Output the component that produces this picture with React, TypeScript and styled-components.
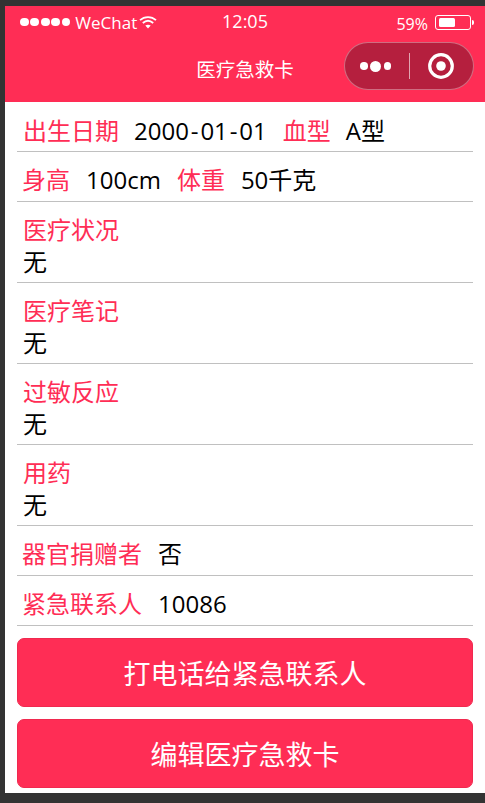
import React from "react"
import styled, { createGlobalStyle } from "styled-components"

const RED = "#ff2d55"

const Global = createGlobalStyle`
  html, body {
    margin: 0;
    padding: 0;
    background: #333333;
  }
  * {
    box-sizing: border-box;
  }
`

type Field = { label: string; value: string }

const inlineRows: Field[][] = [
  [
    { label: "出生日期", value: "2000-01-01" },
    { label: "血型", value: "A型" },
  ],
  [
    { label: "身高", value: "100cm" },
    { label: "体重", value: "50千克" },
  ],
]

const stackedRows: Field[] = [
  { label: "医疗状况", value: "无" },
  { label: "医疗笔记", value: "无" },
  { label: "过敏反应", value: "无" },
  { label: "用药", value: "无" },
]

const bottomRows: Field[] = [
  { label: "器官捐赠者", value: "否" },
  { label: "紧急联系人", value: "10086" },
]

function WifiIcon() {
  return (
    <svg width="18" height="14" viewBox="0 0 18 14" fill="none" stroke="#fff" strokeWidth="1.8">
      <path d="M1 5.2C5.6 1 12.4 1 17 5.2" />
      <path d="M3.8 8C7 5.2 11 5.2 14.2 8" />
      <path d="M9 13.6L6.3 10.6C8 9.3 10 9.3 11.7 10.6Z" fill="#fff" stroke="none" />
    </svg>
  )
}

function RecordIcon() {
  return (
    <svg width="28" height="28" viewBox="0 0 28 28">
      <circle cx="14" cy="14" r="11.3" fill="none" stroke="#fff" strokeWidth="3.2" />
      <circle cx="14" cy="14" r="4.8" fill="#fff" />
    </svg>
  )
}

// the hyphens of the date are wider than in the font we have
function renderValue(value: string) {
  if (!value.includes("-")) return value
  return value.split("-").map((part, i) => (
    <React.Fragment key={i}>
      {i > 0 && <Hyphen>-</Hyphen>}
      {part}
    </React.Fragment>
  ))
}

export default function App() {
  return (
    <>
      <Global />
      <Page>
        <Header>
          <StatusBar>
            <Carrier>
              <Signal>
                {[0, 1, 2, 3, 4].map((i) => (
                  <SignalDot key={i} />
                ))}
              </Signal>
              <CarrierName>WeChat</CarrierName>
              <WifiIcon />
            </Carrier>
            <Time>12:05</Time>
            <Power>
              <span>59%</span>
              <Battery>
                <BatteryFill />
              </Battery>
              <BatteryTip />
            </Power>
          </StatusBar>
          <NavBar>
            <NavTitle>医疗急救卡</NavTitle>
            <Capsule>
              <MoreDots>
                <MoreDot />
                <MoreDot $big />
                <MoreDot />
              </MoreDots>
              <CapsuleLine />
              <RecordIcon />
            </Capsule>
          </NavBar>
        </Header>
        <Content>
          {inlineRows.map((row, i) => (
            <InlineRow key={i} $first={i === 0}>
              {row.map((f) => (
                <Pair key={f.label} $first={i === 0}>
                  <Label>{f.label}</Label>
                  <Value>{renderValue(f.value)}</Value>
                </Pair>
              ))}
            </InlineRow>
          ))}
          {stackedRows.map((f) => (
            <StackedRow key={f.label}>
              <Label>{f.label}</Label>
              <Value>{f.value}</Value>
            </StackedRow>
          ))}
          {bottomRows.map((f) => (
            <InlineRow key={f.label}>
              <Pair>
                <Label>{f.label}</Label>
                <Value>{f.value}</Value>
              </Pair>
            </InlineRow>
          ))}
          <ActionButton>打电话给紧急联系人</ActionButton>
          <ActionButton>编辑医疗急救卡</ActionButton>
        </Content>
      </Page>
    </>
  )
}

const Page = styled.div`
  width: 480px;
  height: 787px;
  margin: 6px 0 0 5px;
  background: #fff;
  font-family: "Open Sans", "Noto Sans CJK SC", sans-serif;
`

const Header = styled.div`
  height: 96px;
  background: ${RED};
  color: #fff;
`

const StatusBar = styled.div`
  height: 36px;
  padding: 0 11px 0 15px;
  display: grid;
  grid-template-columns: 1fr auto 1fr;
  align-items: center;
`

const Carrier = styled.div`
  display: flex;
  align-items: center;
  margin-bottom: 4px;
`

const CarrierName = styled.span`
  font-size: 17px;
  margin-right: 2px;
`

const Signal = styled.div`
  display: flex;
  gap: 1.6px;
  margin-right: 5px;
`

const SignalDot = styled.div`
  width: 8.8px;
  height: 8.8px;
  border-radius: 50%;
  background: #fff;
`

const Time = styled.div`
  font-size: 18px;
  margin-bottom: 7px;
  transform: translateX(-2px);
`

const Power = styled.div`
  display: flex;
  align-items: center;
  justify-content: flex-end;
  font-size: 16px;
`

const Battery = styled.div`
  width: 36px;
  height: 15px;
  margin: 0 0 3px 7px;
  padding: 2px 3px;
  border: 1px solid #fff;
  border-radius: 3px;
`

const BatteryFill = styled.div`
  width: 16px;
  height: 100%;
  border-radius: 1.5px;
  background: #fff;
`

const BatteryTip = styled.div`
  width: 2px;
  height: 5px;
  margin: 0 0 3px 1px;
  border-radius: 0 2px 2px 0;
  background: #fff;
`

const NavBar = styled.div`
  height: 60px;
  padding: 0 11px;
  display: grid;
  grid-template-columns: 1fr auto 1fr;
  align-items: start;
`

const NavTitle = styled.div`
  grid-column: 2;
  padding-top: 15px;
  font-size: 19.5px;
  line-height: 26px;
`

const Capsule = styled.div`
  grid-column: 3;
  justify-self: end;
  width: 130px;
  height: 48px;
  padding: 0 18px 0 15px;
  display: flex;
  align-items: center;
  justify-content: space-between;
  background: #b51f3e;
  border: 1px solid rgba(255, 255, 255, 0.35);
  border-radius: 24px;
`

const MoreDots = styled.div`
  display: flex;
  align-items: center;
  gap: 2.5px;
`

const MoreDot = styled.div<{ $big?: boolean }>`
  width: ${(p) => (p.$big ? 11 : 7.5)}px;
  height: ${(p) => (p.$big ? 11 : 7.5)}px;
  border-radius: 50%;
  background: #fff;
`

const CapsuleLine = styled.div`
  width: 1px;
  height: 26px;
  background: rgba(255, 255, 255, 0.6);
`

const Content = styled.div`
  padding: 0 12px;
  display: flex;
  flex-direction: column;
`

const InlineRow = styled.div<{ $first?: boolean }>`
  height: 50px;
  padding: ${(p) => (p.$first ? "8px 0 0 6px" : "7px 0 0 5px")};
  display: flex;
  align-items: center;
  gap: 16px;
  border-bottom: 1px solid #c0c0c0;
`

const Pair = styled.div<{ $first?: boolean }>`
  display: flex;
  align-items: center;
  gap: ${(p) => (p.$first ? 15 : 16)}px;
`

const StackedRow = styled.div`
  height: 81px;
  padding: 12px 0 0 6px;
  border-bottom: 1px solid #c0c0c0;
`

const Label = styled.div`
  color: ${RED};
  font-size: 24px;
  line-height: 32px;
`

const Value = styled.div`
  color: #000;
  font-size: 24px;
  line-height: 32px;
`

const Hyphen = styled.span`
  display: inline-block;
  width: 11.5px;
  text-align: center;
`

const ActionButton = styled.button`
  width: 100%;
  height: 69px;
  margin-top: 12px;
  padding: 0;
  border: 1px solid #f0294f;
  border-radius: 7px;
  background: ${RED};
  color: #fff;
  font-family: inherit;
  font-size: 27px;
`
